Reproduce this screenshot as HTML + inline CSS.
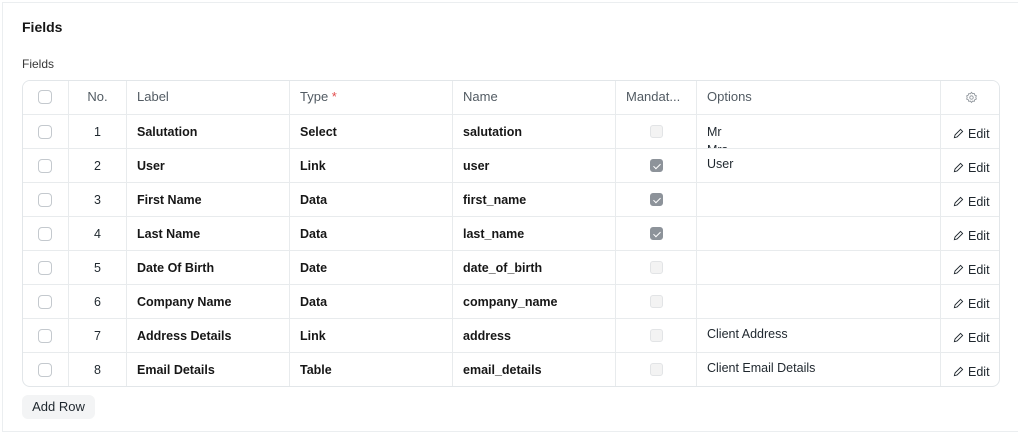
<!DOCTYPE html>
<html><head><style>
*{box-sizing:border-box;margin:0;padding:0}
body{width:1024px;height:436px;background:#fff;font-family:"Liberation Sans",sans-serif;color:#1f272e;position:relative;overflow:hidden}
.card{position:absolute;left:2px;top:2px;width:1016px;height:430px;border:1px solid #ebeef0;border-right:none}
.title{position:absolute;left:22px;top:19px;font-size:14px;font-weight:bold;color:#171717}
.lbl{position:absolute;left:22px;top:57px;font-size:12px;color:#383838}
.tbl{position:absolute;left:22px;top:80px;width:978px;height:307px;border:1px solid #e2e6e9;border-radius:8px;overflow:hidden}
.row{position:absolute;left:0;width:978px;height:34px;border-top:1px solid #e8ebed}
.hdr{top:0;border-top:none;background:#fff;border-bottom:1px solid #e2e6e9;height:34px}
.c{position:absolute;top:0;height:34px;border-left:1px solid #e8ebed;font-size:12.5px;line-height:35px;padding-left:10px;white-space:nowrap;overflow:hidden}
.hdr .c{color:#525b63;font-size:13px;line-height:32px}
.b{font-weight:bold;color:#171717}
.cb{position:absolute;left:15px;top:10px;width:14px;height:14px;border:1px solid #c4c9ce;border-radius:4px;background:#fff}
.hdr .cb{top:9px}
.mc{position:absolute;left:34px;top:10px;width:13px;height:13px;border-radius:3px;background:#f3f3f3;border:1px solid #e2e4e6}
.mc.on{background:#8d939a;border-color:#8d939a}
.mc.on::after{content:"";position:absolute;left:3.5px;top:1.5px;width:3px;height:6px;border:solid #fff;border-width:0 1.5px 1.5px 0;transform:rotate(45deg)}
.edit{font-size:12.5px;color:#1f272e;padding-left:12px;line-height:38px}
.btn{position:absolute;left:22px;top:395px;width:73px;height:24px;background:#f3f4f5;border-radius:6px;font-size:13px;line-height:24px;text-align:center;color:#1f272e}
</style></head><body>
<div class="card"></div>
<div class="title">Fields</div>
<div class="lbl">Fields</div>
<div class="tbl">
<div class="row hdr">
<div class="c" style="left:0;width:45px;border:none"><div class="cb"></div></div>
<div class="c" style="left:45px;width:58px;text-align:center;padding:0">No.</div>
<div class="c" style="left:103px;width:163px">Label</div>
<div class="c" style="left:266px;width:163px">Type <span style="color:#e24c4c">*</span></div>
<div class="c" style="left:429px;width:163px">Name</div>
<div class="c" style="left:592px;width:81px">Mandat...</div>
<div class="c" style="left:673px;width:244px">Options</div>
<div class="c" style="left:917px;width:61px;padding:0;text-align:center"><svg width="13" height="13" viewBox="0 0 24 24" style="margin-top:10px" fill="none" stroke="#8d939a" stroke-width="1.6"><circle cx="12" cy="12" r="3.2"/><path d="M12 2.5l2 2.4 3.1-.4.9 3 2.9 1.3-.9 3 .9 3-2.9 1.3-.9 3-3.1-.4-2 2.4-2-2.4-3.1.4-.9-3L3.1 15l.9-3-.9-3 2.9-1.3.9-3 3.1.4z"/></svg></div>
</div>
</div>
<script>
var d=[["1","Salutation","Select","salutation",0,"Mr"],["2","User","Link","user",1,"User"],["3","First Name","Data","first_name",1,""],["4","Last Name","Data","last_name",1,""],["5","Date Of Birth","Date","date_of_birth",0,""],["6","Company Name","Data","company_name",0,""],["7","Address Details","Link","address",0,"Client Address"],["8","Email Details","Table","email_details",0,"Client Email Details"]];
var t=document.querySelector('.tbl'),h='';
d.forEach(function(r,i){
h+='<div class="row" style="top:'+(33+i*34)+'px">'+
'<div class="c" style="left:0;width:45px;border:none"><div class="cb"></div></div>'+
'<div class="c" style="left:45px;width:58px;text-align:center;padding:0">'+r[0]+'</div>'+
'<div class="c b" style="left:103px;width:163px">'+r[1]+'</div>'+
'<div class="c b" style="left:266px;width:163px">'+r[2]+'</div>'+
'<div class="c b" style="left:429px;width:163px">'+r[3]+'</div>'+
'<div class="c" style="left:592px;width:81px"><div class="mc'+(r[4]?' on':'')+'"></div></div>'+
'<div class="c" style="left:673px;width:244px;line-height:'+(i==0?'18px;padding-top:8px':'31px')+'">'+r[5]+(i==0?'<br>Mrs':'')+'</div>'+
'<div class="c edit" style="left:917px;width:61px"><svg width="11" height="11" viewBox="0 0 16 16" fill="none" stroke="#1f272e" stroke-width="1.3" style="vertical-align:-1px;margin-right:4px"><path d="M2 14l1-4 8-8 3 3-8 8z"/></svg>Edit</div></div>';
});
t.insertAdjacentHTML('beforeend',h);
</script>
<div class="btn">Add Row</div>
</body></html>
